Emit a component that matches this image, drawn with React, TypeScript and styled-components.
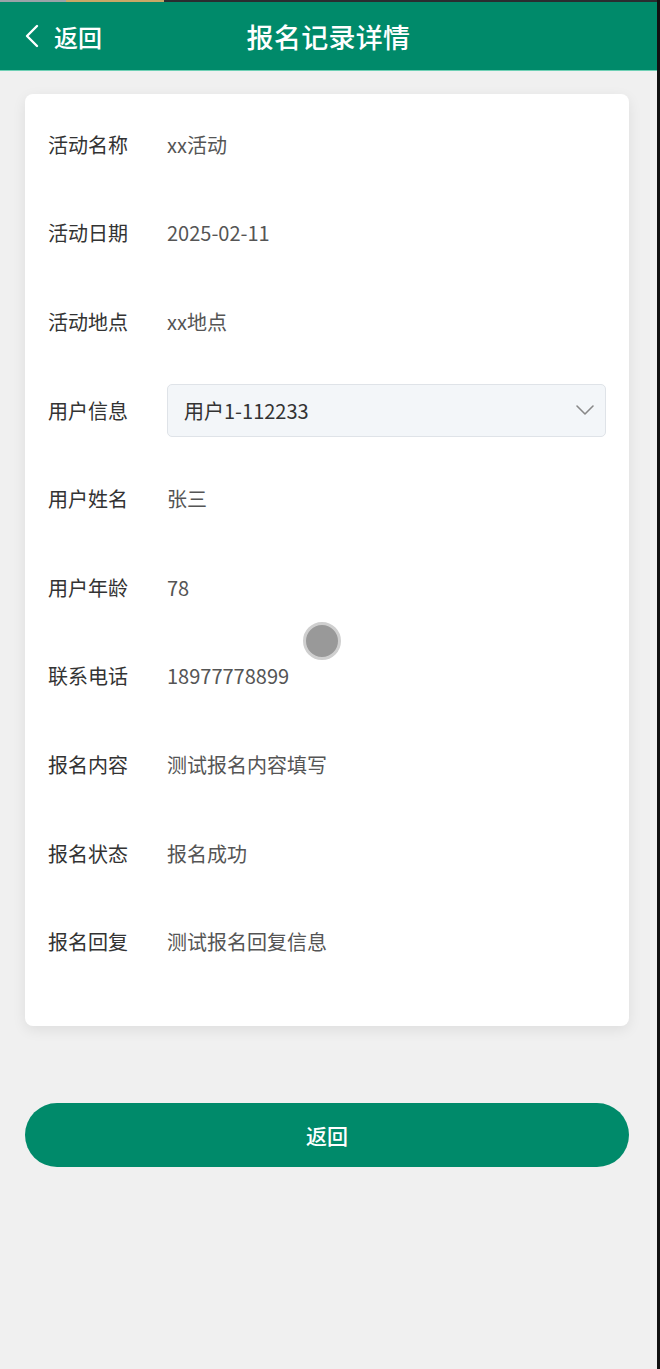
import React from 'react'
import styled, { createGlobalStyle } from 'styled-components'

const GlobalStyle = createGlobalStyle`
  html, body {
    margin: 0;
    padding: 0;
    background: #f0f0f0;
    font-family: "Noto Sans CJK SC", "Noto Sans", sans-serif;
  }
`

const Page = styled.div`
  position: relative;
  width: 657px;
  min-height: 1369px;
  background: #f0f0f0;
  border-right: 3px solid #111;
  display: flex;
  flex-direction: column;
`

const TopStrip = styled.div`
  height: 2px;
  background: linear-gradient(90deg, #9aa3a8 0 10%, #c9a866 10% 25%, #2a2d30 25% 100%);
`

const Header = styled.header`
  height: 68px;
  background: #008a6a;
  display: grid;
  grid-template-columns: 1fr auto 1fr;
  align-items: center;
  color: #fff;
  border-bottom: 1px solid #6fd0b5;
`

const Back = styled.div`
  display: flex;
  align-items: center;
  gap: 14px;
  padding-left: 24px;
  font-size: 24px;
  font-weight: 500;
`

const Title = styled.h1`
  margin: 0;
  font-size: 27px;
  font-weight: 500;
  letter-spacing: 0.3px;
`

const Card = styled.section`
  margin: 23px 28px 0 25px;
  background: #fff;
  border-radius: 8px;
  box-shadow: 0 4px 14px rgba(0, 0, 0, 0.08);
  padding: 6px 23px 40px;
`

const Row = styled.div`
  display: flex;
  align-items: center;
  height: 88.6px;
`

const Label = styled.div`
  width: 119px;
  flex-shrink: 0;
  font-size: 20px;
  color: #333;
`

const Value = styled.div`
  font-size: 20px;
  color: #555;
`

const Select = styled.div`
  flex: 1;
  height: 53px;
  box-sizing: border-box;
  background: #f3f6f9;
  border: 1px solid #dfe3e8;
  border-radius: 5px;
  display: flex;
  align-items: center;
  justify-content: space-between;
  padding: 0 10px 0 16px;
  font-size: 20px;
  color: #333;
`

const SubmitButton = styled.button`
  margin: 77px 28px 0 25px;
  height: 64px;
  border: none;
  border-radius: 32px;
  background: #008a6a;
  color: #fff;
  font-family: inherit;
  font-size: 21px;
  font-weight: 500;
`

const TouchDot = styled.div`
  position: absolute;
  left: 303px;
  top: 622px;
  width: 32px;
  height: 32px;
  border-radius: 50%;
  background: #999;
  border: 3px solid #cfcfcf;
`

const rows: { label: string; value: string; select?: boolean }[] = [
  { label: '活动名称', value: 'xx活动' },
  { label: '活动日期', value: '2025-02-11' },
  { label: '活动地点', value: 'xx地点' },
  { label: '用户信息', value: '用户1-112233', select: true },
  { label: '用户姓名', value: '张三' },
  { label: '用户年龄', value: '78' },
  { label: '联系电话', value: '18977778899' },
  { label: '报名内容', value: '测试报名内容填写' },
  { label: '报名状态', value: '报名成功' },
  { label: '报名回复', value: '测试报名回复信息' },
]

export default function App() {
  return (
    <Page>
      <GlobalStyle />
      <TopStrip />
      <Header>
        <Back>
          <svg width="16" height="24" viewBox="0 0 16 24" fill="none">
            <path d="M13 2 L3 12 L13 22" stroke="#fff" strokeWidth="2.4" strokeLinecap="round" strokeLinejoin="round" />
          </svg>
          返回
        </Back>
        <Title>报名记录详情</Title>
        <div />
      </Header>
      <Card>
        {rows.map((r, i) => (
          <Row key={i}>
            <Label>{r.label}</Label>
            {r.select ? (
              <Select>
                {r.value}
                <svg width="20" height="12" viewBox="0 0 20 12" fill="none">
                  <path d="M2 2 L10 10 L18 2" stroke="#888" strokeWidth="1.6" strokeLinecap="round" strokeLinejoin="round" />
                </svg>
              </Select>
            ) : (
              <Value>{r.value}</Value>
            )}
          </Row>
        ))}
      </Card>
      <SubmitButton>返回</SubmitButton>
      <TouchDot />
    </Page>
  )
}
